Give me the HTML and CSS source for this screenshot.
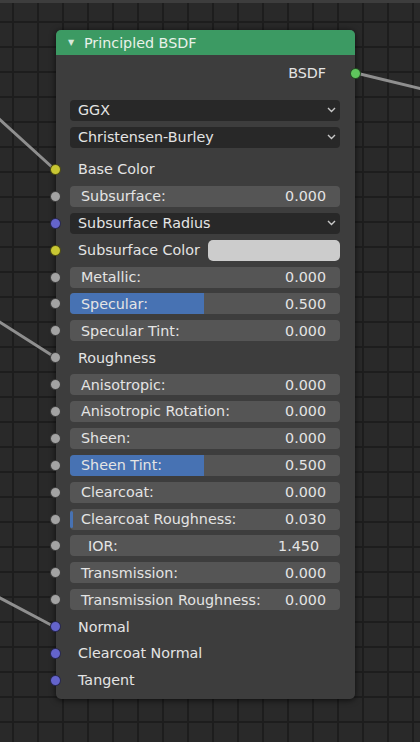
FILE: index.html
```html
<!DOCTYPE html>
<html>
<head>
<meta charset="utf-8">
<link rel="stylesheet" href="styles.css">
</head>
<body>
<div class="editor">
  <div class="topbar"></div>
  <svg class="wires" width="420" height="742" viewBox="0 0 420 742">
    <path d="M-2 118 L53 168" />
    <path d="M-2 321 L53 356" />
    <path d="M-2 597 L53 626" />
    <path d="M356 73 L422 89" />
  </svg>
  <div class="node">
    <div class="header"><span class="tri">▼</span><span class="title">Principled BSDF</span></div>
    <div class="body">
      <div class="row out"><span class="label">BSDF</span><span class="socket s-green sock-right"></span></div>
      <div class="dropdowns">
        <div class="row"><div class="dropdown"><span>GGX</span><svg class="chev" width="9" height="6" viewBox="0 0 9 6"><path d="M1 1 L4.5 4.5 L8 1"/></svg></div></div>
        <div class="row"><div class="dropdown"><span>Christensen-Burley</span><svg class="chev" width="9" height="6" viewBox="0 0 9 6"><path d="M1 1 L4.5 4.5 L8 1"/></svg></div></div>
      </div>
      <div class="inputs">
        <div class="row"><span class="socket s-yellow"></span><span class="plain">Base Color</span></div>
        <div class="row"><span class="socket s-gray"></span><div class="field"><span class="flabel">Subsurface:</span><span class="fval">0.000</span></div></div>
        <div class="row"><span class="socket s-blue"></span><div class="dropdown"><span>Subsurface Radius</span><svg class="chev" width="9" height="6" viewBox="0 0 9 6"><path d="M1 1 L4.5 4.5 L8 1"/></svg></div></div>
        <div class="row"><span class="socket s-yellow"></span><span class="plain">Subsurface Color</span><span class="swatch"></span></div>
        <div class="row"><span class="socket s-gray"></span><div class="field"><span class="flabel">Metallic:</span><span class="fval">0.000</span></div></div>
        <div class="row"><span class="socket s-gray"></span><div class="field"><span class="fill" style="width:49.5%"></span><span class="flabel">Specular:</span><span class="fval">0.500</span></div></div>
        <div class="row"><span class="socket s-gray"></span><div class="field"><span class="flabel">Specular Tint:</span><span class="fval">0.000</span></div></div>
        <div class="row"><span class="socket s-gray"></span><span class="plain">Roughness</span></div>
        <div class="row"><span class="socket s-gray"></span><div class="field"><span class="flabel">Anisotropic:</span><span class="fval">0.000</span></div></div>
        <div class="row"><span class="socket s-gray"></span><div class="field"><span class="flabel">Anisotropic Rotation:</span><span class="fval">0.000</span></div></div>
        <div class="row"><span class="socket s-gray"></span><div class="field"><span class="flabel">Sheen:</span><span class="fval">0.000</span></div></div>
        <div class="row"><span class="socket s-gray"></span><div class="field"><span class="fill" style="width:49.5%"></span><span class="flabel">Sheen Tint:</span><span class="fval">0.500</span></div></div>
        <div class="row"><span class="socket s-gray"></span><div class="field"><span class="flabel">Clearcoat:</span><span class="fval">0.000</span></div></div>
        <div class="row"><span class="socket s-gray"></span><div class="field"><span class="fill thin" style="width:1.2%"></span><span class="flabel">Clearcoat Roughness:</span><span class="fval">0.030</span></div></div>
        <div class="row"><span class="socket s-gray"></span><div class="field ior"><span class="flabel">IOR:</span><span class="fval">1.450</span></div></div>
        <div class="row"><span class="socket s-gray"></span><div class="field"><span class="flabel">Transmission:</span><span class="fval">0.000</span></div></div>
        <div class="row"><span class="socket s-gray"></span><div class="field"><span class="flabel">Transmission Roughness:</span><span class="fval">0.000</span></div></div>
        <div class="row"><span class="socket s-blue"></span><span class="plain">Normal</span></div>
        <div class="row"><span class="socket s-blue"></span><span class="plain">Clearcoat Normal</span></div>
        <div class="row"><span class="socket s-blue"></span><span class="plain">Tangent</span></div>
      </div>
    </div>
  </div>
</div>
</body>
</html>
```
FILE: styles.css
```css
html, body {
  margin: 0;
  padding: 0;
}
body {
  width: 420px;
  height: 742px;
  overflow: hidden;
  font-family: "DejaVu Sans", "Liberation Sans", sans-serif;
  font-size: 14.3px;
  color: #e4e4e4;
}
.editor {
  position: relative;
  width: 420px;
  height: 742px;
  background-color: #292929;
  background-image:
    linear-gradient(to right, #1d1d1d 0, #1d1d1d 2px, transparent 2px),
    linear-gradient(to bottom, #1d1d1d 0, #1d1d1d 2px, transparent 2px);
  background-size: 25px 25px;
  background-position: 12px 21px;
  overflow: hidden;
}
.topbar {
  height: 3px;
  background: #3d3d3d;
  position: relative;
  z-index: 1;
}
.wires {
  position: absolute;
  left: 0;
  top: 0;
}
.wires path {
  stroke: #8f8f8f;
  stroke-width: 3;
  fill: none;
  stroke-linecap: round;
}
.node {
  position: absolute;
  left: 56px;
  top: 30px;
  width: 299px;
  border-radius: 5px;
  background: #3d3d3d;
  box-shadow: 0 1px 6px rgba(0, 0, 0, 0.7);
}
.header {
  height: 25px;
  background: #3c9a63;
  border-radius: 5px 5px 0 0;
  display: flex;
  align-items: center;
  color: #e9f1ea;
}
.tri {
  font-size: 8px;
  width: 28px;
  padding-left: 12px;
  box-sizing: border-box;
  color: #d8e8dc;
}
.title {
  font-size: 14.3px;
  padding-top: 1px;
}
.body {
  padding: 4.5px 0 5px 0;
}
.row {
  position: relative;
  height: 26.9px;
  display: flex;
  align-items: center;
  padding: 0 15px 0 14px;
}
.row.out {
  height: 27px;
  justify-content: flex-end;
  padding-right: 29px;
}
.dropdowns {
  margin-top: 10px;
  margin-bottom: 5.5px;
}
.dropdowns .row {
  height: 27px;
}
.socket {
  position: absolute;
  left: -6px;
  top: 50%;
  width: 9px;
  height: 9px;
  margin-top: -5.5px;
  border-radius: 50%;
  border: 1px solid rgba(0, 0, 0, 0.6);
}
.sock-right {
  left: auto;
  right: -6px;
}
.s-green { background: #5fc65d; }
.s-gray { background: #a3a3a3; }
.s-yellow { background: #c8c733; }
.s-blue { background: #6464cc; }
.dropdown {
  flex: 1;
  height: 21px;
  border-radius: 4px;
  background: #282828;
  display: flex;
  align-items: center;
  justify-content: space-between;
  padding: 0 4px 0 8px;
}
.chev path {
  stroke: #c8c8c8;
  stroke-width: 1.4;
  fill: none;
}
.plain {
  padding-left: 8px;
}
.field {
  position: relative;
  flex: 1;
  height: 21px;
  border-radius: 4px;
  background: #555555;
  display: flex;
  align-items: center;
  justify-content: space-between;
  padding: 0 14px 0 11px;
  overflow: hidden;
}
.field.ior {
  padding: 0 21px 0 18px;
}
.fill {
  position: absolute;
  left: 0;
  top: 0;
  bottom: 0;
  background: #4772b3;
}
.fill.thin {
  border-radius: 2px;
  top: 2px;
  bottom: 2px;
}
.flabel, .fval {
  position: relative;
}
.swatch {
  margin-left: auto;
  width: 132px;
  height: 21px;
  border-radius: 5px;
  background: #cccccc;
}
```
